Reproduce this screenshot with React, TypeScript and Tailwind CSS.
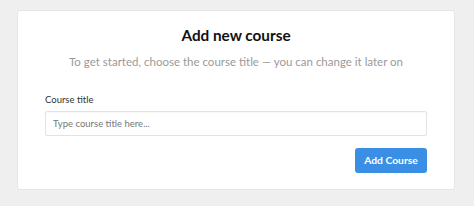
export default function App() {
  return (
    <div className="w-[474px] h-[206px] bg-[#efefef] pt-[10px] pl-[17px]" style={{ fontFamily: 'Lato, "Noto Sans", sans-serif' }}>
      <div className="w-[438px] h-[180px] bg-white rounded-[3px] border border-[#e6e6e6] flex flex-col px-[27px]">
        <h1 className="mt-[14px] text-center text-[15.3px] font-bold text-[#111] leading-[20px]">Add new course</h1>
        <p className="mt-[9px] text-center text-[11.5px] text-[#9a9a9a] leading-[16px]">
          To get started, choose the course title — you can change it later on
        </p>
        <label className="mt-[23px] text-[9.5px] text-[#333] leading-[14px]">Course title</label>
        <input
          className="mt-[4px] h-[25px] w-full border border-[#e2e2e2] rounded-[2px] px-[7px] text-[9.5px] text-[#333] placeholder:text-[#777] outline-none shadow-[inset_0_1px_1px_rgba(0,0,0,0.03)]"
          placeholder="Type course title here..."
        />
        <div className="flex justify-end mt-[12px]">
          <button className="h-[25px] w-[72px] rounded-[3px] bg-[#3a8ee4] text-white text-[10.3px] font-bold">Add Course</button>
        </div>
      </div>
    </div>
  );
}
